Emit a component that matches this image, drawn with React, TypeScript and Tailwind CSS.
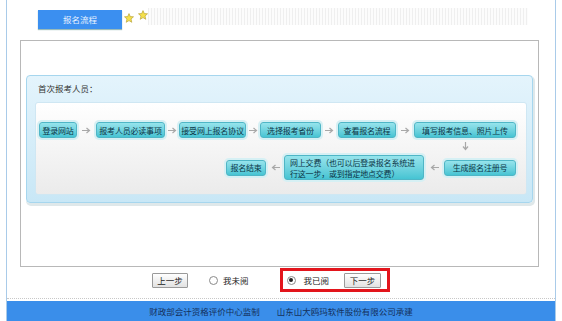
import React from "react";

const font = { fontFamily: '"Noto Sans CJK SC", "Noto Sans", sans-serif' };

function Star({ className }: { className?: string }) {
  return (
    <svg width="10" height="10" viewBox="0 0 10 10" className={className}>
      <polygon
        points="5,0.6 6.3,3.6 9.5,3.8 7,6 7.8,9.3 5,7.6 2.2,9.3 3,6 0.5,3.8 3.7,3.6"
        fill="#f5e04a"
        stroke="#b9a43a"
        strokeWidth="0.7"
      />
    </svg>
  );
}

function Box({ w, children, h = 16, left }: { w: number; children: React.ReactNode; h?: number; left?: boolean }) {
  return (
    <div
      className={
        left
          ? "flex items-center justify-start whitespace-nowrap rounded-[3px] border border-[#4fb6c6] bg-gradient-to-b from-[#96e4ec] to-[#45c4d3] pl-[5px] text-left text-[8px] leading-[11px] tracking-[-0.2px] text-[#0c3546] shadow-[0_0_0_2px_#d6f0f4]"
          : "flex items-center justify-center whitespace-nowrap rounded-[3px] border border-[#4fb6c6] bg-gradient-to-b from-[#96e4ec] to-[#45c4d3] text-center text-[8px] leading-[11px] tracking-[-0.2px] text-[#0c3546] shadow-[0_0_0_2px_#d6f0f4]"
      }
      style={{ width: w, height: h }}
    >
      {children}
    </div>
  );
}

function ArrowR({ w }: { w: number }) {
  return (
    <div className="flex items-center justify-center" style={{ width: w }}>
      <svg width="9" height="7" viewBox="0 0 9 7">
        <path d="M0 3.5H7M4.5 1L7.5 3.5L4.5 6" stroke="#a8a8a8" strokeWidth="1.2" fill="none" />
      </svg>
    </div>
  );
}

function ArrowL({ w }: { w: number }) {
  return (
    <div className="flex items-center justify-center" style={{ width: w }}>
      <svg width="9" height="7" viewBox="0 0 9 7">
        <path d="M9 3.5H2M4.5 1L1.5 3.5L4.5 6" stroke="#a8a8a8" strokeWidth="1.2" fill="none" />
      </svg>
    </div>
  );
}

function Btn({ children, w }: { children: React.ReactNode; w: number }) {
  return (
    <div
      className="flex h-[15px] items-center justify-center rounded-[1px] border border-[#9a9a9a] bg-gradient-to-b from-[#ffffff] to-[#e2e2e2] text-[8.5px] text-[#222]"
      style={{ width: w }}
    >
      {children}
    </div>
  );
}

function Radio({ checked }: { checked?: boolean }) {
  return (
    <div className="flex h-[9px] w-[9px] items-center justify-center rounded-full border border-[#8a8a8a] bg-white">
      {checked && <div className="h-[4px] w-[4px] rounded-full bg-[#222]" />}
    </div>
  );
}

export default function App() {
  return (
    <div className="h-[321px] w-[562px] overflow-hidden bg-white" style={font}>
      <div className="ml-[6px] flex h-[321px] w-[550px] flex-col border-x border-[#a9cbe9]">
        {/* header */}
        <div className="flex items-start pt-[8px] pl-[31px]">
          <div className="mt-[2px] flex h-[19px] w-[84px] items-center justify-center bg-[#3b8ff0] text-[8.5px] text-[#e8f2ff] shadow-[0_1px_1px_#9bb]">
            报名流程
          </div>
          <div className="mt-[5px] ml-[2px]">
            <Star />
          </div>
          <div className="mt-[2px] ml-[4px]">
            <Star />
          </div>
          <div className="h-[17px] w-[380px] bg-[repeating-linear-gradient(90deg,#efefef_0_1px,#fcfcfc_1px_3px)]" />
        </div>

        {/* inner box */}
        <div className="mt-[11px] ml-[13px] h-[227px] w-[519px] border border-[#b8b8b8] bg-white">
          <div className="mt-[34px] ml-[5px] h-[128px] w-[507px] rounded-[4px] border border-[#a6d6ee] bg-gradient-to-b from-[#e4f4fc] to-[#c8e7f6] shadow-[1px_2px_0_1px_#dfe8ea]">
            <div className="pt-[6px] pl-[11px] text-[8.5px] leading-[12px] text-[#333]">首次报考人员：</div>
            <div className="mt-[8px] ml-[8px] h-[93px] w-[492px] rounded-[3px] border border-[#cfe7f3] bg-gradient-to-b from-[#ffffff] to-[#ebebeb]">
              <div className="flex items-center pt-[19px] pl-[3px]">
                <Box w={38}>登录网站</Box>
                <ArrowR w={19} />
                <Box w={69}>报考人员必读事项</Box>
                <ArrowR w={14} />
                <Box w={67}>接受网上报名协议</Box>
                <ArrowR w={14} />
                <Box w={61}>选择报考省份</Box>
                <ArrowR w={17} />
                <Box w={58}>查看报名流程</Box>
                <ArrowR w={18} />
                <Box w={102}>填写报考信息、照片上传</Box>
              </div>
              <div className="flex h-[17px] justify-end pr-[10px]">
                <div className="flex w-[102px] items-center justify-center">
                  <svg width="7" height="9" viewBox="0 0 7 9">
                    <path d="M3.5 0V7M1 4.5L3.5 7.5L6 4.5" stroke="#a8a8a8" strokeWidth="1.2" fill="none" />
                  </svg>
                </div>
              </div>
              <div className="flex h-[25px] items-center justify-end pr-[10px]">
                <Box w={40}>报名结束</Box>
                <ArrowL w={18} />
                <Box w={140} h={25} left>
                  <div>
                    网上交费（也可以后登录报名系统进
                    <br />
                    行这一步，或到指定地点交费）
                  </div>
                </Box>
                <ArrowL w={20} />
                <Box w={72}>生成报名注册号</Box>
              </div>
            </div>
          </div>
        </div>

        {/* buttons row */}
        <div className="mt-[1px] flex h-[24px] items-center">
          <div className="ml-[145px]">
            <Btn w={36}>上一步</Btn>
          </div>
          <div className="ml-[21px]">
            <Radio />
          </div>
          <div className="ml-[5px] text-[8.5px] text-[#222]">我未阅</div>
          <div className="ml-[31px] flex h-[24px] w-[110px] items-center border-[3px] border-[#e3151c] pl-[4px]">
            <Radio checked />
            <div className="ml-[8px] text-[8.5px] text-[#222]">我已阅</div>
            <div className="ml-[15px]">
              <Btn w={37}>下一步</Btn>
            </div>
          </div>
        </div>

        <div className="mt-[6px] border-t border-dotted border-[#c8c8c8]" />
        <div className="mt-[2px] flex h-[20px] items-center justify-center gap-[17px] bg-[#3a8eea] text-[8.5px] text-[#14305a]">
          <span>财政部会计资格评价中心监制</span>
          <span>山东山大鸥玛软件股份有限公司承建</span>
        </div>
      </div>
    </div>
  );
}
